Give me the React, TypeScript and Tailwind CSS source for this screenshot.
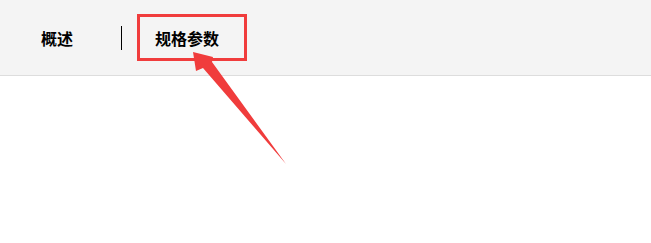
import React from "react";

export default function App() {
  return (
    <div className="relative w-[651px] h-[243px] bg-white overflow-hidden" style={{ fontFamily: '"Microsoft YaHei", "Noto Sans CJK SC", sans-serif' }}>
      <div className="flex items-center h-[76px] bg-[#f4f4f4] border-b border-[#dddddd]">
        <div className="pl-[41px] w-[121px] text-[16px] font-bold text-black leading-none">概述</div>
        <div className="w-px h-[24px] bg-black" />
        <div className="ml-[15px] flex items-center h-[47px] w-[110px] border-[3px] border-[#f03c3c] pl-[15px] text-[16px] font-bold text-black leading-none">
          规格参数
        </div>
      </div>
      <svg className="absolute left-0 top-0" width="651" height="243" viewBox="0 0 651 243">
        <polygon points="193,52 213,57 212,62 286,164 203,68 196,71" fill="#f03c3c" />
      </svg>
    </div>
  );
}
